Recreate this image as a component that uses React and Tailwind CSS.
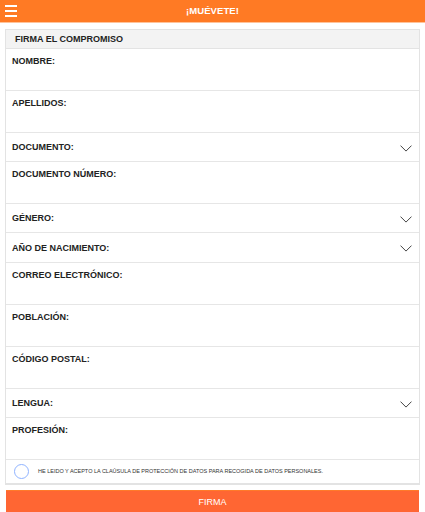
import React from 'react';

const fields = [
  { label: 'NOMBRE:', type: 'text' },
  { label: 'APELLIDOS:', type: 'text' },
  { label: 'DOCUMENTO:', type: 'select' },
  { label: 'DOCUMENTO NÚMERO:', type: 'text' },
  { label: 'GÉNERO:', type: 'select' },
  { label: 'AÑO DE NACIMIENTO:', type: 'select', tall: true },
  { label: 'CORREO ELECTRÓNICO:', type: 'text' },
  { label: 'POBLACIÓN:', type: 'text' },
  { label: 'CÓDIGO POSTAL:', type: 'text' },
  { label: 'LENGUA:', type: 'select' },
  { label: 'PROFESIÓN:', type: 'text' },
];

const Chevron = () => (
  <svg width="12" height="7" viewBox="0 0 12 7" fill="none" className="text-[#444]">
    <path d="M0.5 0.6L6 6.1L11.5 0.6" stroke="currentColor" strokeWidth="1" />
  </svg>
);

function Row({ field }) {
  if (field.type === 'select') {
    return (
      <div className={`flex items-center justify-between border-b border-[#e6e6e6] pl-[6px] pr-[7px] pt-[2px] ${field.tall ? 'h-[30px]' : 'h-[29px]'}`}>
        <span className="text-[9px] font-bold text-[#222]">{field.label}</span>
        <Chevron />
      </div>
    );
  }
  return (
    <div className="h-[42px] border-b border-[#e6e6e6] pl-[6px] pt-[7px]">
      <span className="block text-[9px] leading-[10px] font-bold text-[#222]">{field.label}</span>
    </div>
  );
}

export default function App() {
  return (
    <div className="w-[425px] h-[512px] overflow-hidden bg-white font-['Liberation_Sans',Arial,sans-serif]">
      <div className="h-[23px] bg-[#ff7a24] border-b border-[#ffc39a] grid grid-cols-[1fr_auto_1fr] items-center">
        <div className="pl-[5px] flex flex-col gap-[3px]">
          <span className="block w-[12px] h-[2px] bg-white" />
          <span className="block w-[12px] h-[2px] bg-white" />
          <span className="block w-[12px] h-[2px] bg-white" />
        </div>
        <span className="text-[9.5px] font-bold text-white tracking-[0.1px]">¡MUÉVETE!</span>
        <div />
      </div>

      <div className="px-[5px] pt-[6px]">
        <div className="border border-[#e3e3e3] border-b-[2px]">
          <div className="h-[19px] bg-[#f3f3f3] border-b border-[#e3e3e3] flex items-center pl-[9px] pt-[1px]">
            <span className="text-[9px] font-bold text-[#222]">FIRMA EL COMPROMISO</span>
          </div>
          {fields.map((f) => (
            <Row key={f.label} field={f} />
          ))}
          <div className="h-[23px] flex items-center pl-[8px] gap-[9px]">
            <span className="block w-[15px] h-[15px] rounded-full border border-[#8fb3ff] bg-white" />
            <span className="text-[5.5px] text-[#333]">
              HE LEIDO Y ACEPTO LA CLAÚSULA DE PROTECCIÓN DE DATOS PARA RECOGIDA DE DATOS PERSONALES.
            </span>
          </div>
        </div>

        <button className="mt-[5px] w-[413px] ml-[1px] h-[24px] bg-[#ff6633] border-t border-[#ff7a2a] text-white text-[9px] flex items-center justify-center">
          FIRMA
        </button>
      </div>
    </div>
  );
}
